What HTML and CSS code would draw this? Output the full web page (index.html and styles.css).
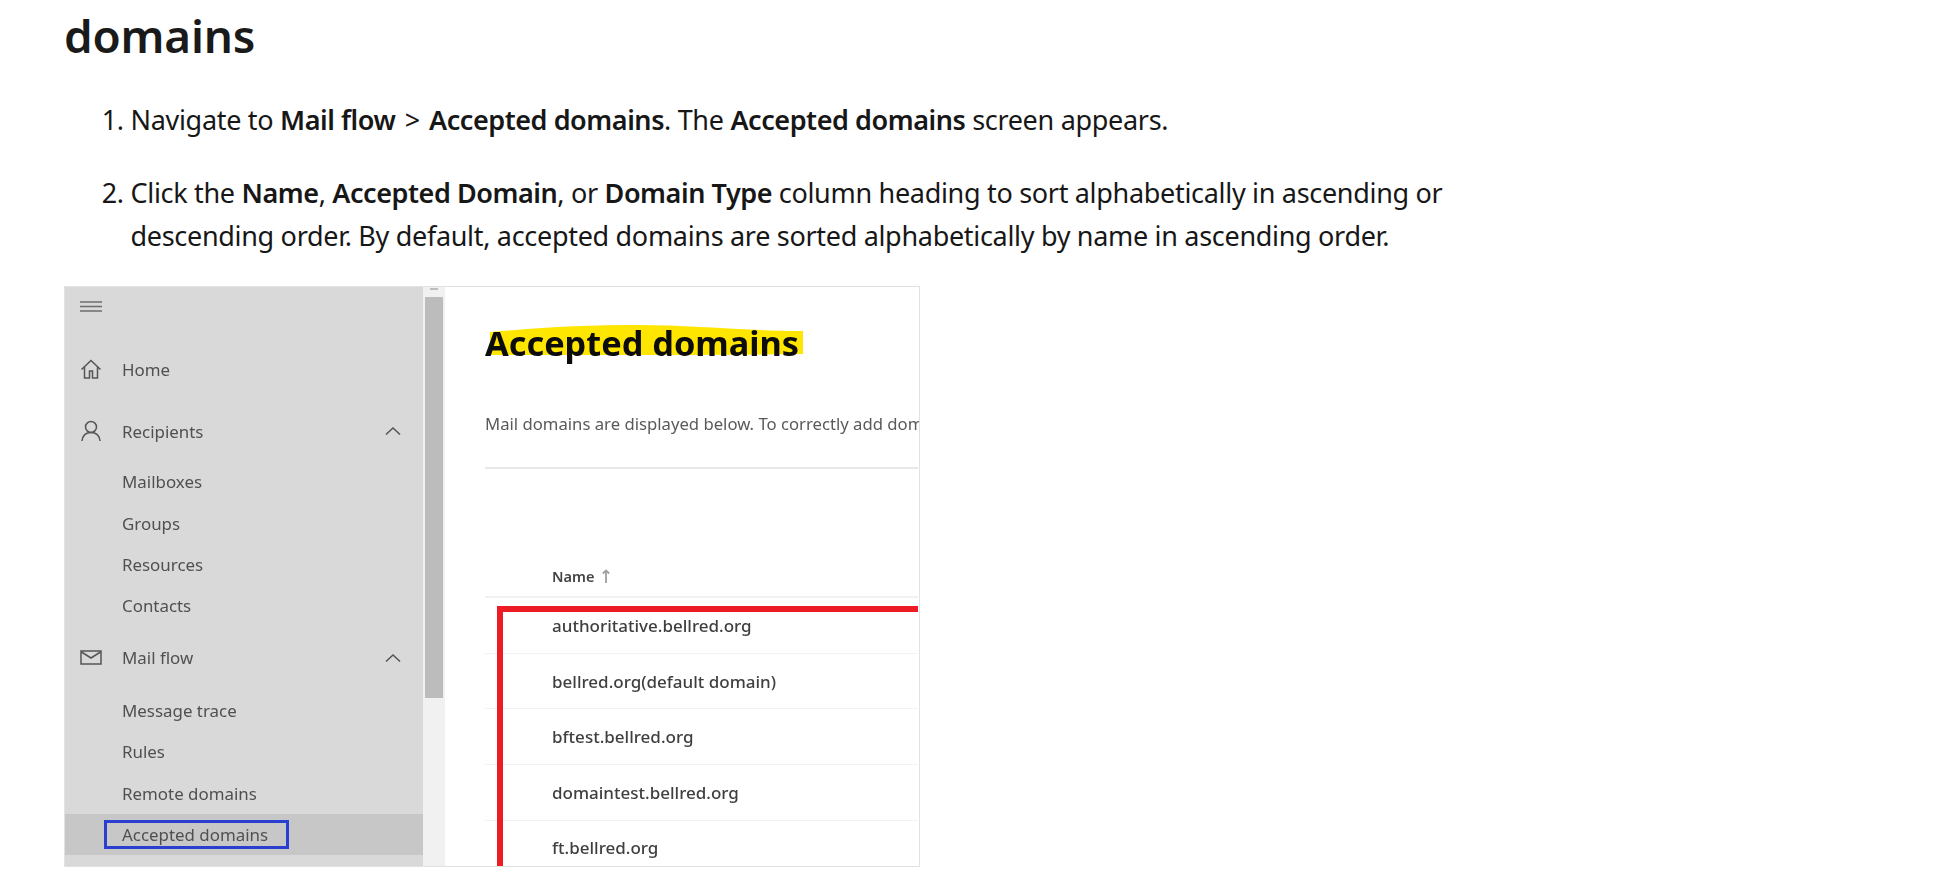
FILE: index.html
```html
<!DOCTYPE html>
<html lang="en">
<head>
<meta charset="utf-8">
<title>Accepted domains</title>
<link rel="stylesheet" href="styles.css">
</head>
<body>
<main class="article">
  <h2 class="heading">domains</h2>
  <ol class="steps">
    <li>Navigate to <strong>Mail flow</strong> <span class="sep">&gt;</span> <strong>Accepted domains</strong>. The <strong>Accepted domains</strong> screen appears.</li>
    <li>Click the <strong>Name</strong>, <strong>Accepted Domain</strong>, or <strong>Domain Type</strong> column heading to sort alphabetically in ascending or descending order. By default, accepted domains are sorted alphabetically by name in ascending order.</li>
  </ol>
  <figure class="shot">
    <nav class="side">
      <div class="burger">
        <svg class="ico-burger" viewBox="0 0 22 11" aria-hidden="true"><path d="M0 1h22M0 5.500h22M0 10h22"/></svg>
      </div>
      <div class="item home">
        <svg class="ico" viewBox="0 0 22 22" aria-hidden="true"><path d="M1.500 11.500 11 2.500l9.500 9M4.500 9v11h5v-7h3v7h5V9"/></svg>
        <span>Home</span>
      </div>
      <div class="item">
        <svg class="ico" viewBox="0 0 22 22" aria-hidden="true"><circle cx="11" cy="7" r="5.500"/><path d="M2 21c.6-5.500 4-8.500 9-8.500s8.400 3 9 8.500"/></svg>
        <span>Recipients</span>
        <svg class="chev" viewBox="0 0 16 8" aria-hidden="true"><path d="M1 7.500 8 1l7 6.500"/></svg>
      </div>
      <ul class="sub first">
        <li>Mailboxes</li>
        <li>Groups</li>
        <li>Resources</li>
        <li>Contacts</li>
      </ul>
      <div class="item mail">
        <svg class="ico" viewBox="0 0 22 15" aria-hidden="true"><rect x="1" y="1" width="20" height="13"/><path d="M1.500 2 11 8l9.500-6"/></svg>
        <span>Mail flow</span>
        <svg class="chev" viewBox="0 0 16 8" aria-hidden="true"><path d="M1 7.500 8 1l7 6.500"/></svg>
      </div>
      <ul class="sub second">
        <li>Message trace</li>
        <li>Rules</li>
        <li>Remote domains</li>
        <li class="current">Accepted domains</li>
      </ul>
      <span class="blue-box"></span>
    </nav>
    <div class="scroll">
      <span class="scroll-up"></span>
      <span class="scroll-thumb"></span>
    </div>
    <section class="pane">
      <svg class="marker" viewBox="0 0 314 30" preserveAspectRatio="none" aria-hidden="true"><path d="M2 7C60 2 100 0 150 0s110 6 164 6v23c-60 1-120 1-180 1H2z"/></svg>
      <h3 class="pane-title">Accepted domains</h3>
      <p class="pane-desc">Mail domains are displayed below. To correctly add domains to your organization</p>
      <hr class="pane-rule">
      <div class="col-head">Name <svg class="sort" viewBox="0 0 10 14" aria-hidden="true"><path d="M5 14V1.500M1.800 4.500 5 1.500l3.200 3"/></svg></div>
      <ul class="rows">
        <li>authoritative.bellred.org</li>
        <li>bellred.org(default domain)</li>
        <li>bftest.bellred.org</li>
        <li>domaintest.bellred.org</li>
        <li>ft.bellred.org</li>
      </ul>
      <span class="red-box"></span>
    </section>
  </figure>
</main>
</body>
</html>
```

FILE: styles.css
```css
* { box-sizing: border-box; }
html, body { margin: 0; padding: 0; background: #fff; }
body { height: 894px; overflow: hidden; font-family: "Noto Sans", "Open Sans", sans-serif; color: #171717; }
.article { padding-left: 64px; }
.heading { margin: 0; padding-top: 4px; font-size: 45.800px; line-height: 62px; font-weight: 600; letter-spacing: -.2px; color: #1a1a1a; }
.steps { margin: 0; padding: 0 0 0 66.500px; width: 1400px; font-size: 27px; line-height: 43.400px; letter-spacing: -.31px; }
.steps li { margin-top: 29.800px; }
.steps li:first-child { margin-top: 31.500px; }
.steps strong { font-weight: 600; letter-spacing: -.44px; }
.sep { margin: 0 2.500px; }
.shot { display: flex; width: 856px; height: 581px; margin: 28.700px 0 0; border: 1px solid #e2e2e2; overflow: hidden; filter: blur(.5px); }
.side { position: relative; width: 358px; height: 100%; background: #d9d9d9; color: #505050; font-size: 16.900px; }
.burger { display: flex; align-items: center; height: 38px; padding-left: 15px; margin-bottom: 23px; }
.ico-burger { width: 22px; height: 11px; fill: none; stroke: #6d6d6d; stroke-width: 1.300; }
.item { display: flex; align-items: center; height: 42px; padding: 0 22px 0 15px; margin-bottom: 9px; }
.item.home { margin-bottom: 20px; }
.item span { margin-left: 20px; flex: 1; }
.ico { width: 22px; height: 22px; fill: none; stroke: #555; stroke-width: 1.500; }
.item.mail .ico { height: 15px; }
.item.mail { margin-bottom: 11px; }
.chev { width: 16px; height: 8px; fill: none; stroke: #555; stroke-width: 1.500; }
.sub { list-style: none; margin: 0; padding: 0; }
.sub li { display: flex; align-items: center; height: 41.300px; padding-left: 57px; }
.sub.first { margin-bottom: 10.500px; }
.sub .current { background: #c7c7c7; }
.blue-box { position: absolute; left: 39px; top: 533px; width: 185px; height: 29px; border: 3px solid #2a3fd0; }
.scroll { display: flex; flex-direction: column; align-items: center; width: 22px; height: 100%; background: #f1f1f1; }
.scroll-up { width: 8px; height: 2px; margin-top: 1px; background: #bdbdbd; }
.scroll-thumb { width: 18px; height: 401px; margin-top: 7px; background: #bcbcbc; }
.pane { position: relative; flex: 1; min-width: 0; padding: 0 0 0 40px; background: #fff; overflow: hidden; }
.marker { position: absolute; left: 43px; top: 38px; width: 315px; height: 30px; fill: #ffe600; }
.pane-title { position: relative; margin: 33px 0 0; font-size: 34.300px; line-height: 46px; font-weight: 700; color: #0c0c0c; white-space: nowrap; }
.pane-desc { margin: 46px 0 0; font-size: 16.700px; line-height: 24px; color: #5a5a5a; white-space: nowrap; overflow: hidden; }
.pane-rule { height: 2px; margin: 31px 1px 0 0; border: 0; background: #e8e8e8; }
.col-head { display: flex; align-items: center; gap: 7px; height: 39px; margin-top: 90px; padding: 0 0 4px 67px; margin-right: 1px; border-bottom: 2px solid #f1f1f1; font-size: 14.500px; font-weight: 600; color: #444; }
.sort { width: 10px; height: 14px; fill: none; stroke: #a0a0a0; stroke-width: 1.800; }
.rows { list-style: none; margin: 0 1px 0 0; padding: 0; font-size: 17px; font-weight: 500; color: #3f3f3f; }
.rows li { display: flex; align-items: center; height: 55.600px; padding-left: 67px; border-bottom: 1px solid #f3f3f3; }
.red-box { position: absolute; left: 52px; top: 319px; right: 1px; height: 300px; border-top: 6px solid #ed1c24; border-left: 6px solid #ed1c24; }
```
